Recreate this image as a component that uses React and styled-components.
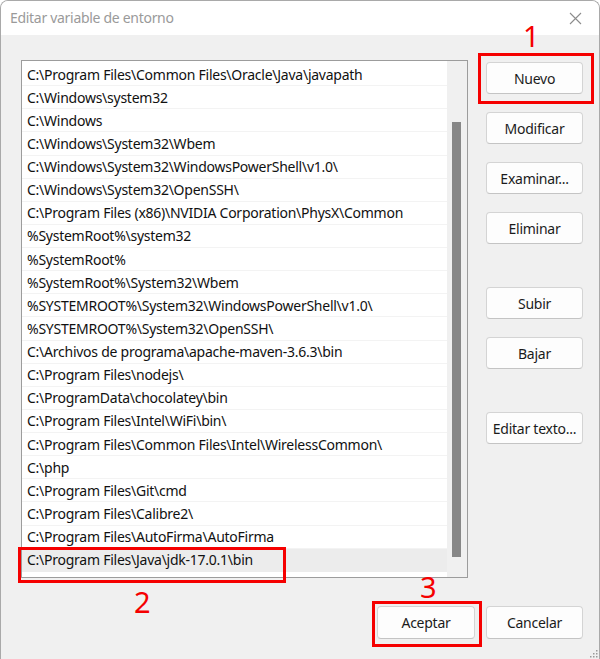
import React from 'react'
import styled, { createGlobalStyle } from 'styled-components'

const GlobalStyle = createGlobalStyle`
    html, body {
        margin: 0;
        padding: 0;
        background: #ffffff;
    }
    body {
        font-family: 'Noto Sans', 'Liberation Sans', sans-serif;
    }
`

const Window = styled.div`
    position: relative;
    box-sizing: border-box;
    width: 600px;
    height: 659px;
    border: 1px solid #a9a9a9;
    border-bottom: none;
    border-radius: 8px 8px 0 0;
    background: #f0f0f0;
    overflow: hidden;
`

const TitleBar = styled.div`
    height: 34px;
    background: #ffffff;
    display: flex;
    align-items: center;
    justify-content: space-between;
    padding: 0 0 0 9px;
`

const Title = styled.span`
    font-size: 14px;
    letter-spacing: -0.3px;
    color: #9a9a9a;
    margin-top: -1px;
`

const CloseButton = styled.div`
    width: 46px;
    height: 34px;
    display: flex;
    align-items: center;
    justify-content: center;
    margin-right: 1px;
`

const Body = styled.div`
    display: grid;
    grid-template-columns: 447px 97px;
    column-gap: 18px;
    padding: 25px 0 0 20px;
`

const List = styled.div`
    box-sizing: border-box;
    height: 518px;
    border: 1px solid #9c9c9c;
    background: #ffffff;
    display: flex;
`

const Rows = styled.div`
    flex: 1;
    padding-top: 2px;
`

const Row = styled.div`
    position: relative;
    box-sizing: border-box;
    height: 23.14px;
    padding-left: 5px;
    display: flex;
    align-items: center;
    font-size: 14px;
    letter-spacing: -0.25px;
    color: #111111;
    white-space: nowrap;
    background: ${p => (p.$selected ? '#ececec' : '#ffffff')};
    border-bottom: 1px solid ${p => (p.$selected ? '#ececec' : '#f3f3f3')};
`

const Track = styled.div`
    width: 20px;
    background: #f0f0f0;
    position: relative;
`

const Thumb = styled.div`
    position: absolute;
    left: 5px;
    width: 9px;
    top: 61px;
    height: 435px;
    background: #878787;
`

const Side = styled.div`
    display: flex;
    flex-direction: column;
    padding-top: 2px;
`

const Button = styled.div`
    position: relative;
    box-sizing: border-box;
    width: ${p => p.$w || 97}px;
    height: ${p => p.$h || 32}px;
    border: 1px solid #d4d4d4;
    border-bottom-color: #c4c4c4;
    border-radius: 4px;
    background: #fdfdfd;
    display: flex;
    align-items: center;
    justify-content: center;
    font-size: 14px;
    letter-spacing: -0.25px;
    color: #1b1b1b;
    margin-top: ${p => p.$gap || 0}px;
    white-space: nowrap;
`

const Footer = styled.div`
    display: flex;
    justify-content: flex-end;
    gap: 11px;
    padding: 28px 16px 0 0;
`

const RedBox = styled.div`
    position: absolute;
    box-sizing: border-box;
    border: 3px solid #f50000;
    top: ${p => p.$t}px;
    left: ${p => p.$l}px;
    width: ${p => p.$w}px;
    height: ${p => p.$h}px;
    pointer-events: none;
`

const Number = styled.span`
    position: absolute;
    top: ${p => p.$t}px;
    left: ${p => p.$l}px;
    font-family: 'Noto Sans', sans-serif;
    font-size: 29px;
    letter-spacing: 0;
    line-height: 1;
    color: #f50000;
`

const Grip = styled.svg`
    position: absolute;
    right: 1px;
    bottom: 1px;
`

const paths = [
    'C:\\Program Files\\Common Files\\Oracle\\Java\\javapath',
    'C:\\Windows\\system32',
    'C:\\Windows',
    'C:\\Windows\\System32\\Wbem',
    'C:\\Windows\\System32\\WindowsPowerShell\\v1.0\\',
    'C:\\Windows\\System32\\OpenSSH\\',
    'C:\\Program Files (x86)\\NVIDIA Corporation\\PhysX\\Common',
    '%SystemRoot%\\system32',
    '%SystemRoot%',
    '%SystemRoot%\\System32\\Wbem',
    '%SYSTEMROOT%\\System32\\WindowsPowerShell\\v1.0\\',
    '%SYSTEMROOT%\\System32\\OpenSSH\\',
    'C:\\Archivos de programa\\apache-maven-3.6.3\\bin',
    'C:\\Program Files\\nodejs\\',
    'C:\\ProgramData\\chocolatey\\bin',
    'C:\\Program Files\\Intel\\WiFi\\bin\\',
    'C:\\Program Files\\Common Files\\Intel\\WirelessCommon\\',
    'C:\\php',
    'C:\\Program Files\\Git\\cmd',
    'C:\\Program Files\\Calibre2\\',
    'C:\\Program Files\\AutoFirma\\AutoFirma',
    'C:\\Program Files\\Java\\jdk-17.0.1\\bin',
]

const App = () => {
    const last = paths.length - 1

    return (
        <>
            <GlobalStyle />
            <Window>
                <TitleBar>
                    <Title>Editar variable de entorno</Title>
                    <CloseButton>
                        <svg width="13" height="13" viewBox="0 0 13 13">
                            <path d="M1 1 L12 12 M12 1 L1 12" stroke="#8c8c8c" strokeWidth="1.1" fill="none" />
                        </svg>
                    </CloseButton>
                </TitleBar>
                <Body>
                    <List>
                        <Rows>
                            {paths.map((p, i) => (
                                <Row key={i} $selected={i === last}>
                                    {p}
                                    {i === last && (
                                        <>
                                            <RedBox $t={-2} $l={-4} $w={268} $h={36} />
                                            <Number $t={38} $l={112}>2</Number>
                                        </>
                                    )}
                                </Row>
                            ))}
                        </Rows>
                        <Track>
                            <Thumb />
                        </Track>
                    </List>
                    <Side>
                        <Button>
                            Nuevo
                            <RedBox $t={-10} $l={-9} $w={116} $h={51} />
                            <Number $t={-42} $l={36}>1</Number>
                        </Button>
                        <Button $gap={18}>Modificar</Button>
                        <Button $gap={18}>Examinar...</Button>
                        <Button $gap={18}>Eliminar</Button>
                        <Button $gap={43}>Subir</Button>
                        <Button $gap={18}>Bajar</Button>
                        <Button $gap={43}>Editar texto...</Button>
                    </Side>
                </Body>
                <Footer>
                    <Button $w={98} $h={33}>
                        Aceptar
                        <RedBox $t={-6} $l={-6} $w={110} $h={46} />
                        <Number $t={-35} $l={42}>3</Number>
                    </Button>
                    <Button $h={33}>Cancelar</Button>
                </Footer>
                <Grip width="10" height="10" viewBox="0 0 10 10">
                    {[[8, 2], [8, 5], [5, 5], [8, 8], [5, 8], [2, 8]].map(([x, y], i) => (
                        <rect key={i} x={x} y={y} width="1.5" height="1.5" fill="#9a9a9a" />
                    ))}
                </Grip>
            </Window>
        </>
    )
}

export default App
